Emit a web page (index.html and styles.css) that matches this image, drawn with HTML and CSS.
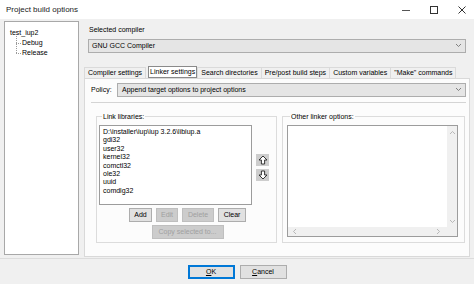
FILE: index.html
```html
<!DOCTYPE html>
<html lang="en">
<head>
    <meta charset="UTF-8">
    <title>Project build options</title>
    <link rel="stylesheet" href="styles.css">
</head>
<body>
    <div class="Window">
        <div class="TitleBar">
            <span class="title">Project build options</span>
            <div class="controls">
                <svg class="ctl" width="10" height="10" viewBox="0 0 10 10"><path d="M1 5.5H9" stroke="#555" stroke-width="1"/></svg>
                <svg class="ctl" width="10" height="10" viewBox="0 0 10 10"><rect x="1.5" y="1.5" width="7" height="7" fill="none" stroke="#333" stroke-width="1"/></svg>
                <svg class="ctl" width="10" height="10" viewBox="0 0 10 10"><path d="M1.5 1.5L8.5 8.5M8.5 1.5L1.5 8.5" stroke="#333" stroke-width="1"/></svg>
            </div>
        </div>

        <div class="Main">
            <div class="Tree">
                <div class="node">test_iup2</div>
                <div class="children">
                    <div class="child">Debug</div>
                    <div class="child">Release</div>
                </div>
            </div>

            <div class="Right">
                <div class="label">Selected compiler</div>
                <div class="combo compiler">
                    <span>GNU GCC Compiler</span>
                    <svg width="7" height="5" viewBox="0 0 7 5"><path d="M1 1L3.5 3.5L6 1" fill="none" stroke="#666" stroke-width="0.8"/></svg>
                </div>

                <div class="Tabs">
                    <span class="tab">Compiler settings</span>
                    <span class="tab active">Linker settings</span>
                    <span class="tab">Search directories</span>
                    <span class="tab">Pre/post build steps</span>
                    <span class="tab">Custom variables</span>
                    <span class="tab">"Make" commands</span>
                </div>

                <div class="Panel">
                    <div class="policy">
                        <span class="policyLabel">Policy:</span>
                        <div class="combo policyCombo">
                            <span>Append target options to project options</span>
                            <svg width="7" height="5" viewBox="0 0 7 5"><path d="M1 1L3.5 3.5L6 1" fill="none" stroke="#666" stroke-width="0.8"/></svg>
                        </div>
                    </div>
                    <div class="sep"></div>

                    <div class="Groups">
                        <fieldset class="group libs">
                            <legend>Link libraries:</legend>
                            <div class="listRow">
                                <div class="list">
                                    <div>D:\installer\iup\iup 3.2.6\libiup.a</div>
                                    <div>gdi32</div>
                                    <div>user32</div>
                                    <div>kernel32</div>
                                    <div>comctl32</div>
                                    <div>ole32</div>
                                    <div>uuid</div>
                                    <div>comdlg32</div>
                                </div>
                                <div class="arrows">
                                    <div class="arrowBtn">
                                        <svg width="10" height="10" viewBox="0 0 10 10"><path d="M5 1L9 5H6.6V9H3.4V5H1Z" fill="#fff" stroke="#222" stroke-width="0.9" stroke-linejoin="round"/></svg>
                                    </div>
                                    <div class="arrowBtn">
                                        <svg width="10" height="10" viewBox="0 0 10 10"><path d="M5 9L9 5H6.6V1H3.4V5H1Z" fill="#fff" stroke="#222" stroke-width="0.9" stroke-linejoin="round"/></svg>
                                    </div>
                                </div>
                            </div>
                            <div class="btnRow">
                                <span class="btn add">Add</span>
                                <span class="btn off edit">Edit</span>
                                <span class="btn off del">Delete</span>
                                <span class="btn clear">Clear</span>
                            </div>
                            <div class="btnRow">
                                <span class="btn off copy">Copy selected to...</span>
                            </div>
                        </fieldset>

                        <fieldset class="group other">
                            <legend>Other linker options:</legend>
                            <div class="textArea">
                                <div class="textBody">
                                    <div class="content"></div>
                                    <div class="vScroll">
                                        <svg width="7" height="5" viewBox="0 0 7 5"><path d="M1 4L3.5 1.5L6 4" fill="none" stroke="#aaa" stroke-width="0.8"/></svg>
                                        <svg width="7" height="5" viewBox="0 0 7 5"><path d="M1 1L3.5 3.5L6 1" fill="none" stroke="#aaa" stroke-width="0.8"/></svg>
                                    </div>
                                </div>
                                <div class="hScroll">
                                    <svg width="5" height="7" viewBox="0 0 5 7"><path d="M4 1L1.5 3.5L4 6" fill="none" stroke="#aaa" stroke-width="0.8"/></svg>
                                    <svg width="5" height="7" viewBox="0 0 5 7"><path d="M1 1L3.5 3.5L1 6" fill="none" stroke="#aaa" stroke-width="0.8"/></svg>
                                    <span class="corner"></span>
                                </div>
                            </div>
                        </fieldset>
                    </div>
                </div>
            </div>
        </div>

        <div class="Footer">
            <span class="btn ok"><u>O</u>K</span>
            <span class="btn cancel"><u>C</u>ancel</span>
        </div>
    </div>
</body>
</html>
```

FILE: styles.css
```css
*{
    box-sizing: border-box;
    margin: 0;
    padding: 0;
}
body{
    width: 474px;
    height: 284px;
    overflow: hidden;
    font-family: "Liberation Sans", Arial, sans-serif;
    font-size: 7px;
    color: #000;
}
.Window{
    width: 474px;
    height: 284px;
    background-color: #f0f0f0;
    display: flex;
    flex-direction: column;
}
.TitleBar{
    height: 19px;
    background-color: #fff;
    display: flex;
    align-items: center;
    justify-content: space-between;
    padding-left: 6px;
}
.title{
    font-size: 8px;
    color: #222;
}
.controls{
    display: flex;
    gap: 18px;
    padding-right: 7px;
}
.ctl{
    display: block;
}

/* main area: tree on the left, tabbed panel on the right */
.Main{
    display: flex;
    padding: 2px 4px 0 4px;
    height: 238px;
}
.Tree{
    width: 75px;
    height: 234px;
    background-color: #fff;
    border: 1px solid #a8a8a8;
    padding: 6px 0 0 5px;
    line-height: 10px;
}
.children{
    position: relative;
    padding-left: 12px;
}
.children::before{
    content: "";
    position: absolute;
    left: 6px;
    top: -2px;
    height: 17px;
    border-left: 1px dotted #9a9a9a;
}
.child{
    position: relative;
}
.child::before{
    content: "";
    position: absolute;
    left: -6px;
    top: 5px;
    width: 5px;
    border-top: 1px dotted #9a9a9a;
}

.Right{
    flex: 1;
    margin-left: 5px;
    display: flex;
    flex-direction: column;
}
.label{
    margin-top: 4px;
    line-height: 10px;
    padding-left: 5px;
}
.combo{
    display: flex;
    align-items: center;
    justify-content: space-between;
    background-color: #e5e5e5;
    border: 1px solid #adadad;
    padding: 0 3px 0 3px;
}
.compiler{
    margin: 4px 4px 0 4px;
    height: 14px;
}

.Tabs{
    display: flex;
    align-items: flex-end;
    margin-top: 13px;
    height: 12px;
    position: relative;
    z-index: 1;
}
.tab{
    height: 11px;
    line-height: 10px;
    padding: 0 3px;
    border: 1px solid #dadada;
    border-bottom: none;
    white-space: nowrap;
}
.tab + .tab{
    margin-left: -1px;
}
.tab.active{
    height: 12px;
    margin: 0 1px 0 2px;
    padding: 0 1px;
    background-color: #fff;
    border: 1px solid #8a8a8a;
}

.Panel{
    height: 180px;
    background-color: #fcfcfc;
    border: 1px solid #d9d9d9;
    padding: 4px 3px 0 6px;
}
.policy{
    display: flex;
    align-items: center;
}
.policyLabel{
    width: 26px;
}
.policyCombo{
    flex: 1;
    height: 14px;
    padding-left: 4px;
}
.sep{
    margin: 5px 0 0 0;
    border-top: 1px solid #d4d4d4;
}

.Groups{
    display: flex;
    margin-top: 9px;
    padding-left: 5px;
}
.group{
    border: 1px solid #dcdcdc;
    min-width: 0;
    height: 131px;
}
legend{
    margin-left: 3px;
    padding: 0 1px;
    line-height: 10px;
}
.libs{
    width: 181px;
    padding: 0 0 0 2px;
}
.listRow{
    display: flex;
    align-items: center;
    gap: 4px;
    margin-top: 3px;
}
.list{
    width: 153px;
    height: 80px;
    background-color: #fff;
    border: 1px solid #9c9c9c;
    padding: 2px 0 0 3px;
    line-height: 8.4px;
}
.arrows{
    display: flex;
    flex-direction: column;
    gap: 3px;
    margin-top: 6px;
}
.arrowBtn{
    width: 13px;
    height: 12px;
    background-color: #cdcdcd;
    display: flex;
    align-items: center;
    justify-content: center;
}
.btnRow{
    display: flex;
    justify-content: center;
    gap: 4px;
    margin-top: 3px;
}
.btnRow + .btnRow{
    margin-top: 3px;
}
.btn{
    height: 14px;
    line-height: 12px;
    text-align: center;
    background-color: #e1e1e1;
    border: 1px solid #adadad;
}
.btn.off{
    color: #a0a0a0;
    background-color: #cccccc;
    border-color: #bfbfbf;
}
.add{ width: 23px; }
.edit{ width: 22px; }
.del{ width: 32px; }
.clear{ width: 28px; }
.copy{ width: 72px; }

.other{
    width: 183px;
    margin-left: 5px;
    padding: 0 0 0 4px;
}
.textArea{
    width: 171px;
    height: 112px;
    margin-top: 3px;
    border: 1px solid #9c9c9c;
    background-color: #fff;
    display: flex;
    flex-direction: column;
}
.textBody{
    flex: 1;
    display: flex;
}
.content{
    flex: 1;
}
.vScroll{
    width: 10px;
    background-color: #f0f0f0;
    display: flex;
    flex-direction: column;
    justify-content: space-between;
    align-items: center;
    padding: 4px 0 3px 0;
}
.hScroll{
    height: 9px;
    background-color: #f0f0f0;
    display: flex;
    align-items: center;
    padding-left: 4px;
}
.hScroll svg + svg{
    margin-left: auto;
}
.corner{
    width: 10px;
    height: 9px;
    margin-left: 6px;
}

.Footer{
    flex: 1;
    border-top: 1px solid #dcdcdc;
    display: flex;
    justify-content: center;
    gap: 5px;
    padding-top: 6px;
    margin-top: 1px;
}
.ok{
    width: 47px;
    border: 1px solid #0078d7;
    box-shadow: inset 0 0 0 1px #0078d7;
}
.cancel{
    width: 47px;
}
```
